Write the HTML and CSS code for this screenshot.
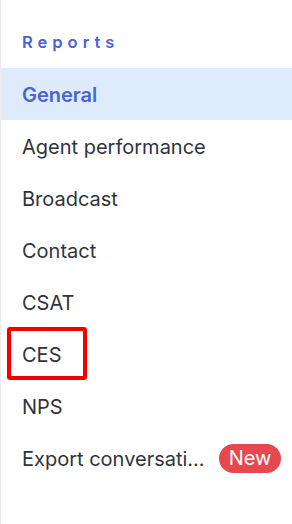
FILE: index.html
```html
<!DOCTYPE html>
<html lang="en">
<head>
  <meta charset="UTF-8" />
  <meta name="viewport" content="width=device-width, initial-scale=1.0" />
  <title>Reports</title>
  <link rel="stylesheet" href="styles.css">
</head>
<body>
  <nav class="sidebar">
    <div class="section-title">Reports</div>
    <ul class="menu">
      <li class="menu-item active">General</li>
      <li class="menu-item">Agent performance</li>
      <li class="menu-item">Broadcast</li>
      <li class="menu-item">Contact</li>
      <li class="menu-item">CSAT</li>
      <li class="menu-item marked">CES</li>
      <li class="menu-item">NPS</li>
      <li class="menu-item">
        <span class="label">Export conversati...</span>
        <span class="badge">New</span>
      </li>
    </ul>
  </nav>
</body>
</html>
```

FILE: styles.css
```css
* {
  margin: 0;
  padding: 0;
  box-sizing: border-box;
}

body {
  font-family: Inter, 'Noto Sans', sans-serif;
  background: #fff;
  color: #2f343c;
  height: 100vh;
  overflow: hidden;
}

.sidebar {
  height: 100%;
  border-left: 1px solid #ececec;
}

.section-title {
  padding: 32px 21px 16px;
  height: 68px;
  line-height: 21px;
  font-size: 16.5px;
  font-weight: 600;
  letter-spacing: 5px;
  color: #4b63d6;
}

.menu {
  list-style: none;
}

.menu-item {
  position: relative;
  display: flex;
  align-items: center;
  height: 52px;
  padding: 1px 21px 0;
  font-size: 20px;
  white-space: nowrap;
}

.menu-item.active {
  background: #deebfd;
  color: #4b63d6;
  font-weight: 600;
}

.menu-item.marked::after {
  content: '';
  position: absolute;
  left: 6px;
  top: -1px;
  width: 80px;
  height: 53px;
  box-sizing: border-box;
  border: 4px solid #f40000;
  border-radius: 3px;
}

.badge {
  flex-shrink: 0;
  margin-left: 14px;
  padding: 0 10px;
  height: 29px;
  line-height: 29px;
  border-radius: 15px;
  background: #e5484d;
  color: #fff;
  font-size: 20px;
}
```
